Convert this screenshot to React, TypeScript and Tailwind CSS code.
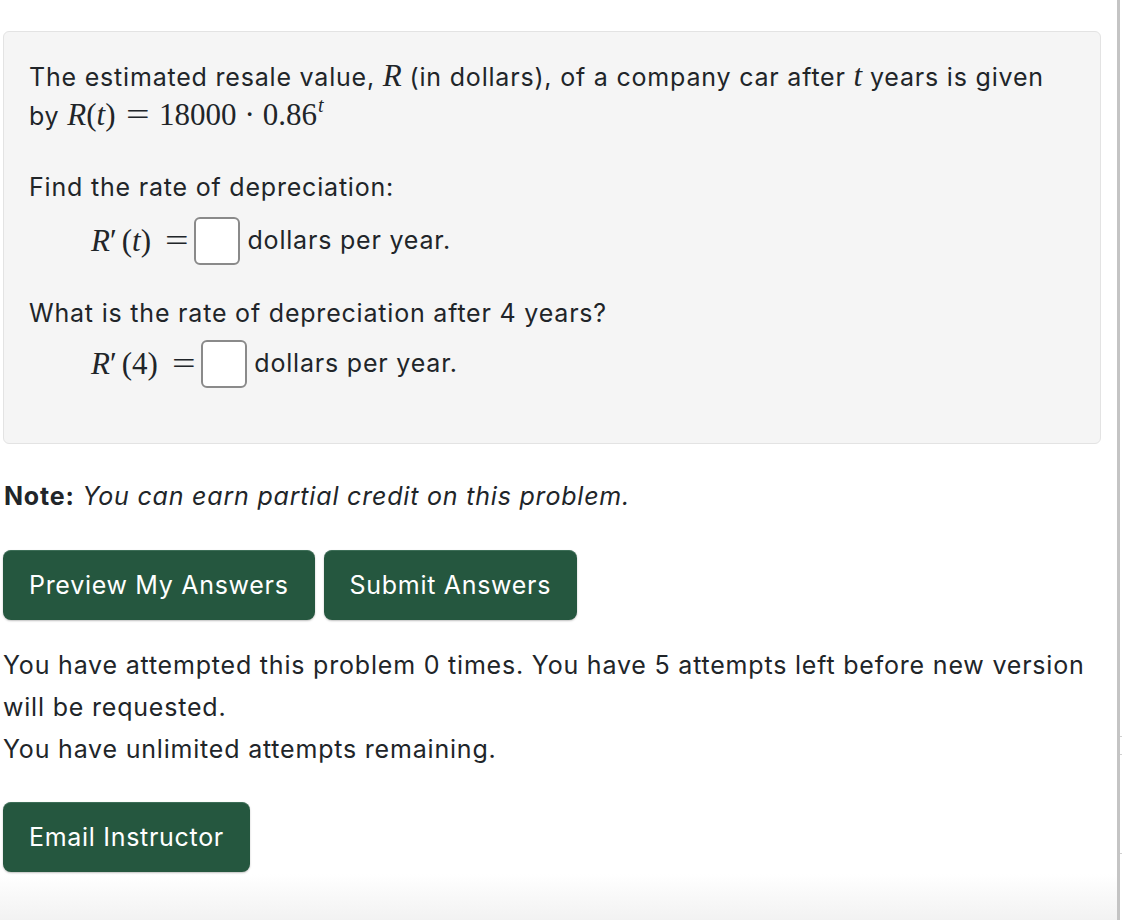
const sans = "font-['Inter','Liberation_Sans',sans-serif]";
const math = "font-['Liberation_Serif','DejaVu_Serif',serif]";

function V({ children }: { children: React.ReactNode }) {
  return <span className={`${math} italic`}>{children}</span>;
}

function M({ children }: { children: React.ReactNode }) {
  return <span className={`${math} text-[31px] leading-[20px] tracking-normal`}>{children}</span>;
}

function Eq({ wide }: { wide?: boolean }) {
  return <span className={`${wide ? "mx-[17px]" : "mx-[13px]"} inline-block scale-x-[1.35]`}>=</span>;
}

function AnswerBox() {
  return (
    <span className="inline-block w-[46px] h-[48px] rounded-[6px] border-2 border-[#8a8a8a] bg-white align-middle ml-[-8px] mr-[7px]" />
  );
}

function GreenButton({ children }: { children: React.ReactNode }) {
  return (
    <button className="h-[70px] px-[26px] rounded-[8px] bg-[#25573f] text-white text-[25px] tracking-[0.7px] border-t border-[#3d6e57] shadow-[0_1px_2px_rgba(0,0,0,0.25)]">
      {children}
    </button>
  );
}

export default function App() {
  return (
    <div className={`${sans} min-h-[920px] w-full bg-white text-[#212529] flex tracking-[0.8px]`}>
      <div className="w-[1117px] shrink-0 flex flex-col pt-[31px] bg-gradient-to-b from-white from-[95%] to-[#f2f2f2]">
        <div className="ml-[3px] w-[1098px] rounded-[6px] border border-[#e3e3e3] bg-[#f5f5f5] px-[25px] pt-[26px] pb-[55px] text-[25px] leading-[39px]">
          <p>
            The estimated resale value, <M><V>R</V></M> (in dollars), of a company car after <M><V>t</V></M> years is given
            <br />
            by{" "}
            <M>
              <V>R</V>(<V>t</V>)<Eq />18000<span className="mx-[8px]">·</span>0.86
              <span className="text-[20px] italic relative -top-[13px] ml-[1px]">t</span>
            </M>
          </p>
          <p className="mt-[32px]">Find the rate of depreciation:</p>
          <div className="mt-[9px] ml-[62px] flex items-center h-[49px]">
            <M>
              <V>R</V>′<span className="ml-[5px]">(</span><V>t</V>)<Eq wide />
            </M>
            <AnswerBox />
            <span>dollars per year.</span>
          </div>
          <p className="mt-[29px]">What is the rate of depreciation after 4 years?</p>
          <div className="mt-[6px] ml-[62px] flex items-center h-[49px]">
            <M>
              <V>R</V>′<span className="ml-[5px]">(</span>4)<Eq wide />
            </M>
            <AnswerBox />
            <span>dollars per year.</span>
          </div>
        </div>

        <p className="mt-[33px] ml-[4px] text-[25px] leading-[39px]">
          <span className="font-bold">Note:</span> <i>You can earn partial credit on this problem.</i>
        </p>

        <div className="mt-[34px] ml-[3px] flex gap-[9px]">
          <GreenButton>Preview My Answers</GreenButton>
          <GreenButton>Submit Answers</GreenButton>
        </div>

        <p className="mt-[24px] ml-[3px] pr-[30px] text-[25px] leading-[42px]">
          You have attempted this problem 0 times. You have 5 attempts left before new version will be requested.
          <br />
          You have unlimited attempts remaining.
        </p>

        <div className="mt-[32px] ml-[3px]">
          <GreenButton>Email Instructor</GreenButton>
        </div>
      </div>
      <div className="flex-1 border-l-[3px] border-[#c4c4c4] flex flex-col">
        <div className="h-[736px]" />
        <div className="border-t border-[#d0d0d0] h-[18px]" />
        <div className="border-t border-[#d0d0d0] h-[99px]" />
        <div className="border-t border-[#d0d0d0] flex-1" />
      </div>
    </div>
  );
}
